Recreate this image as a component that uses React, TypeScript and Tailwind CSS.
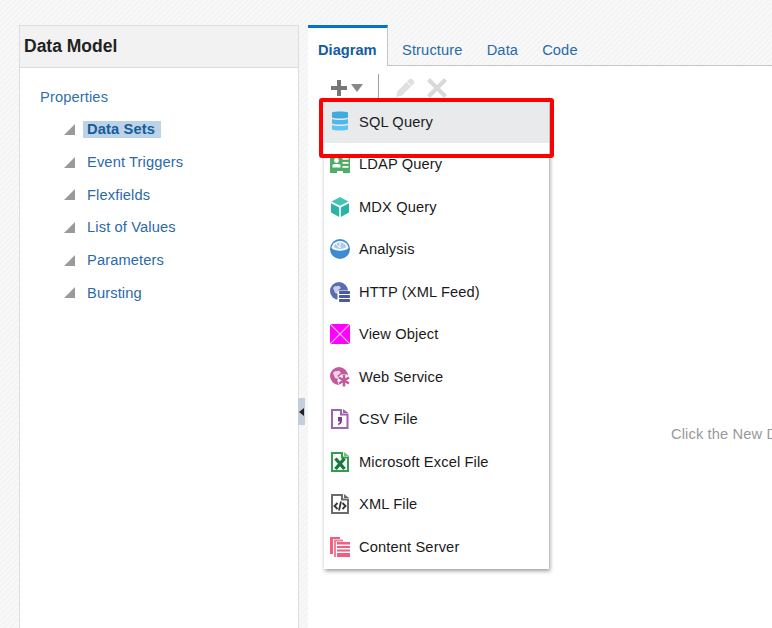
import type { ReactNode } from "react";

function Db() {
  return (
    <svg width="20" height="20" viewBox="0 0 20 20" className="mt-[-2px]">
      <path d="M2 1.5C5 0.2 15 0.2 18 1.5V6.5C15 7.8 5 7.8 2 6.5Z" fill="#3fa9e0" />
      <path d="M2 8C5 9.3 15 9.3 18 8V12.5C15 13.8 5 13.8 2 12.5Z" fill="#4db8ec" />
      <path d="M2 14C5 15.3 15 15.3 18 14V18.5C15 19.8 5 19.8 2 18.5Z" fill="#5cc3f2" />
    </svg>
  );
}

function Ldap() {
  return (
    <svg width="20" height="20" viewBox="0 0 20 20">
      <path d="M0 1H20V19H13V17H7V19H0Z" fill="#4fae63" />
      <circle cx="6.5" cy="6.5" r="2.4" fill="#fff" />
      <path d="M2.5 13.5V11C2.5 9.6 10.5 9.6 10.5 11V13.5Z" fill="#fff" />
      <path d="M12.5 4H18.5V5.8H12.5ZM12.5 8H18.5V9.8H12.5ZM12.5 12H18.5V13.8H12.5Z" fill="#fff" />
    </svg>
  );
}

function Cube() {
  return (
    <svg width="20" height="20" viewBox="0 0 20 20">
      <path d="M10 0L18.5 4.5L10 8.8L1.5 4.5Z" fill="#45c4b8" />
      <path d="M1 6.3L9.2 10.5V20L1 15.5Z" fill="#2bb3a6" />
      <path d="M19 6.3L10.8 10.5V20L19 15.5Z" fill="#2bb3a6" />
    </svg>
  );
}

function Analysis() {
  return (
    <svg width="20" height="20" viewBox="0 0 20 20">
      <circle cx="10" cy="10" r="10" fill="#3f8ad0" />
      <path d="M1.5 9C2.5 4 6 2 10 2S17.5 4 18.5 9C15 12.5 5 12.5 1.5 9Z" fill="#fff" />
      <path d="M3.5 8C4.5 5 7 3.5 10 3.5S15.5 5 16.5 8C13.5 10.5 6.5 10.5 3.5 8Z" fill="#a9cdee" />
      <path d="M10 3.5V9M6 5L10 9" stroke="#fff" strokeWidth="1" fill="none" />
    </svg>
  );
}

function Http() {
  return (
    <svg width="20" height="20" viewBox="0 0 20 20">
      <circle cx="9" cy="9" r="9" fill="#5a6bb0" />
      <path d="M3 6C5 3 7 5 9 3.5L11 6L7.5 8.5L8.5 12L5 11Z" fill="#c9cfe8" />
      <rect x="7.5" y="8.5" width="12.5" height="11.5" fill="#fff" />
      <rect x="9" y="9" width="11" height="3" rx="0.8" fill="#4a5a9e" />
      <rect x="9" y="13" width="11" height="3" rx="0.8" fill="#4a5a9e" />
      <rect x="9" y="17" width="11" height="3" rx="0.8" fill="#4a5a9e" />
    </svg>
  );
}

function ViewObject() {
  return (
    <svg width="20" height="20" viewBox="0 0 20 20">
      <rect width="20" height="20" rx="1" fill="#ff00ff" />
      <path d="M0 0L20 20M20 0L0 20" stroke="#ffc4ff" strokeWidth="1.2" />
    </svg>
  );
}

function WebService() {
  return (
    <svg width="20" height="20" viewBox="0 0 20 20">
      <circle cx="9" cy="9" r="9" fill="#c25a9c" />
      <path d="M3 6C5 3 7 5 9 3.5L11 6L7.5 8.5L8.5 12L5 11Z" fill="#f1d3e6" />
      <circle cx="14" cy="13.5" r="6.5" fill="#fff" />
      <path d="M14 7.5V19.5M9 10.5L19 16.5M19 10.5L9 16.5" stroke="#c25a9c" strokeWidth="2.6" />
    </svg>
  );
}

function Csv() {
  return (
    <svg width="20" height="20" viewBox="0 0 20 20">
      <path d="M2 1H11V5.5H17.5V19H2Z" fill="#fff" stroke="#a063b0" strokeWidth="2" />
      <path d="M13 0L18.5 4H13Z" fill="#a063b0" />
      <path d="M8 8H12V12C12 14.5 10.5 15.5 8 16V14.5C9.2 14.2 9.8 13.7 10 12.5H8Z" fill="#7f3f90" />
    </svg>
  );
}

function Excel() {
  return (
    <svg width="20" height="20" viewBox="0 0 20 20">
      <path d="M2 1H12V5.5H18V19H2Z" fill="#fff" stroke="#2f9e4f" strokeWidth="2" />
      <path d="M14 0L19 4H14Z" fill="#6fbf73" />
      <path d="M5.5 6.5L14.5 17M14.5 6.5L5.5 17" stroke="#16783a" strokeWidth="3.4" />
    </svg>
  );
}

function Xml() {
  return (
    <svg width="20" height="20" viewBox="0 0 20 20">
      <path d="M2 1H12V5.5H18V19H2Z" fill="#fff" stroke="#6b6b6b" strokeWidth="2" />
      <path d="M14 0L19 4H14Z" fill="#6b6b6b" />
      <path d="M7.5 9L4.5 12L7.5 15M12.5 9L15.5 12L12.5 15M11 7.5L9 16.5" stroke="#333" strokeWidth="1.8" fill="none" />
    </svg>
  );
}

function ContentServer() {
  return (
    <svg width="20" height="20" viewBox="0 0 20 20">
      <path d="M0 0H10V2H3V17H0Z" fill="#ee5f80" />
      <path d="M4 2.5H13V4.5H6V20H4Z" fill="#f07f98" />
      <path d="M7 5H20V7.5H7ZM7 9H20V11H7ZM7 12.5H20V14.5H7ZM7 16H20V20H7Z" fill="#ee5f80" />
    </svg>
  );
}

const menuItems: { label: string; icon: ReactNode }[] = [
  { label: "LDAP Query", icon: <Ldap /> },
  { label: "MDX Query", icon: <Cube /> },
  { label: "Analysis", icon: <Analysis /> },
  { label: "HTTP (XML Feed)", icon: <Http /> },
  { label: "View Object", icon: <ViewObject /> },
  { label: "Web Service", icon: <WebService /> },
  { label: "CSV File", icon: <Csv /> },
  { label: "Microsoft Excel File", icon: <Excel /> },
  { label: "XML File", icon: <Xml /> },
  { label: "Content Server", icon: <ContentServer /> },
];

const treeItems = ["Event Triggers", "Flexfields", "List of Values", "Parameters", "Bursting"];

function Arrow() {
  return (
    <svg width="11" height="11" viewBox="0 0 11 11" className="shrink-0">
      <path d="M11 0V11H0Z" fill="#9a9a9a" />
    </svg>
  );
}

export default function App() {
  return (
    <div className="flex h-[628px] overflow-hidden pl-[19px] pt-[25px] font-['Liberation_Sans',Arial,sans-serif] text-[14.67px] tracking-[0.13px] bg-[repeating-linear-gradient(135deg,#f8f8f8_0,#f8f8f8_2px,#f4f4f4_2px,#f4f4f4_4px)]">
      {/* left panel */}
      <div className="w-[280px] shrink-0 border border-b-0 border-[#dddddd] bg-white">
        <div className="flex h-[42px] items-center border-b border-[#dddddd] bg-[#f2f2f2] pl-1 text-[17.5px] font-bold tracking-normal text-[#222222]">
          Data Model
        </div>
        <div className="pl-5 pt-[19px]">
          <div className="h-[20px] leading-[20px] text-[#2f6fb0]">Properties</div>
          <div className="mt-[6px] flex h-[33px] items-center pl-6">
            <Arrow />
            <span className="ml-[8px] bg-[#bcd3e6] pl-[4px] pr-[6px] font-bold leading-[17px] text-[#145c9e]">Data Sets</span>
          </div>
          {treeItems.map((t) => (
            <div key={t} className="flex h-[32.6px] items-center pl-6 text-[#2a6aa8]">
              <Arrow />
              <span className="ml-[12px]">{t}</span>
            </div>
          ))}
        </div>
      </div>

      {/* splitter */}
      <div className="w-[9px] shrink-0">
        <div className="ml-[-1px] mt-[373px] flex h-[27px] w-[7px] items-center justify-center bg-[#c3d0dc]">
          <svg width="5" height="8" viewBox="0 0 5 8">
            <path d="M5 0V8L0 4Z" fill="#222" />
          </svg>
        </div>
      </div>

      {/* main area */}
      <div className="relative min-w-0 flex-1">
        <div className="flex h-[41px] items-end border-b border-[#c0c6cc]">
          <div className="mb-[-1px] flex h-[41px] w-[80px] items-center border-t-[3px] border-r border-t-[#0572ce] border-r-[#c0c6cc] bg-white pl-[10px] pt-[5px] font-bold tracking-normal text-[#145c9e]">
            Diagram
          </div>
          <div className="flex h-[41px] items-center gap-6 pl-[14px] pt-[10px] text-[#2a6aa8]">
            <span>Structure</span>
            <span>Data</span>
            <span>Code</span>
          </div>
        </div>
        <div className="h-[562px] overflow-hidden bg-white">
          <div className="flex h-[34px] items-center pl-[22px] pt-[10px]">
            <svg width="18" height="18" viewBox="0 0 18 18">
              <path d="M7 1H11V7H17V11H11V17H7V11H1V7H7Z" fill="#777" />
            </svg>
            <svg width="12" height="8" viewBox="0 0 12 8" className="ml-[3px]">
              <path d="M0 0H12L6 8Z" fill="#888" />
            </svg>
            <div className="ml-[15px] mt-[-3px] h-[25px] w-px bg-[#9aa0a6]" />
            <svg width="22" height="22" viewBox="0 0 22 22" className="ml-[15px]">
              <path d="M2 20L3.5 14L15 2.5C16 1.5 17.5 1.5 18.5 2.5L19.5 3.5C20.5 4.5 20.5 6 19.5 7L8 18.5Z" fill="#e0e0e0" />
              <path d="M12.5 4.5L17.5 9.5" stroke="#fff" strokeWidth="1" />
            </svg>
            <svg width="22" height="22" viewBox="0 0 22 22" className="ml-[10px]">
              <path d="M4 1L11 8L18 1L21 4L14 11L21 18L18 21L11 14L4 21L1 18L8 11L1 4Z" fill="#d9d9d9" />
            </svg>
          </div>
          <div className="whitespace-nowrap pl-[363px] pt-[323px] text-[#999999]">Click the New Data Set icon</div>
        </div>

        {/* dropdown menu */}
        <div className="absolute left-[16px] top-[75px] w-[225px] bg-white text-[#1a1a1a] shadow-[1px_2px_4px_rgba(0,0,0,0.4)]">
          <div className="flex h-[43px] items-center gap-[9px] bg-[#e9eaec] pl-[6px] pt-[1px]">
            <Db />
            <span>SQL Query</span>
          </div>
          {menuItems.map((m) => (
            <div key={m.label} className="flex h-[42.5px] items-center gap-[9px] pl-[6px]">
              {m.icon}
              <span>{m.label}</span>
            </div>
          ))}
          <div className="h-[1px]" />
        </div>

        {/* red callout */}
        <div className="absolute left-[11px] top-[73px] h-[60px] w-[235px] rounded-[3px] border-[4px] border-[#ff0000]" />
      </div>
    </div>
  );
}
